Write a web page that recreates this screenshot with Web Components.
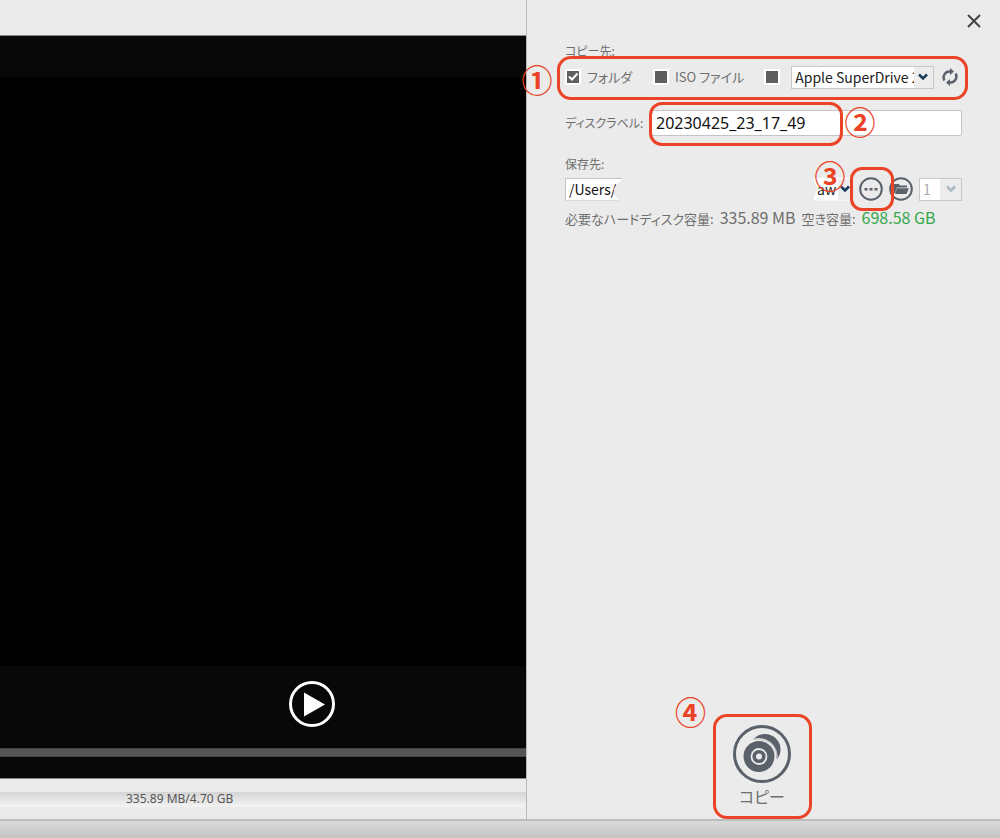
<!DOCTYPE html>
<html lang="ja">
<head>
<meta charset="utf-8">
<title>ディスクコピー</title>
<style>
html,body{margin:0;height:100%}
body{font-family:"Noto Sans CJK JP",sans-serif;font-size:13px;line-height:20px;color:#6e6e6e;background:#ebebeb;overflow:hidden}
</style>
</head>
<body>
<copy-app></copy-app>
<script>
function define(name, html, setup) {
  const template = document.createElement('template');
  template.innerHTML = '<style>*{box-sizing:border-box}</style>' + html;
  customElements.define(name, class extends HTMLElement {
    constructor() {
      super();
      this.attachShadow({mode: 'open'}).append(template.content.cloneNode(true));
    }
    connectedCallback() { if (setup) setup(this, this.shadowRoot); }
  });
}

// Red numbered outline laid over the controls of one step
define('step-mark', `
<style>
:host{position:absolute;box-sizing:border-box;border:3px solid #ea4326;border-radius:14px;pointer-events:none;z-index:2}
</style>`);

define('step-number', `
<style>
:host{position:absolute;z-index:3;font-size:31px;line-height:32px;width:32px;text-align:center;font-weight:700;color:#ea4326;pointer-events:none}
</style><slot></slot>`);

define('check-option', `
<style>
:host{display:block}
label{display:flex;align-items:center;gap:6px;white-space:nowrap;font-feature-settings:"palt"}
input{appearance:none;margin:0;width:16px;height:16px;border:2px solid #fff;background:#5f5f5f;flex:none}
input:checked{background:#5f5f5f url('data:image/svg+xml,<svg xmlns="http://www.w3.org/2000/svg" viewBox="0 0 12 12"><path d="M2 5.5 5 8.5 10.500 2.500" fill="none" stroke="white" stroke-width="2"/></svg>')}
</style>
<label><input type="checkbox"><span><slot></slot></span></label>`,
(host, root) => {
  const input = root.querySelector('input');
  input.checked = host.hasAttribute('checked');
  if (host.hasAttribute('label')) input.setAttribute('aria-label', host.getAttribute('label'));
});

define('drop-down', `
<style>
:host{display:grid;height:23px}
select,svg{grid-area:1/1}
select{appearance:none;width:100%;height:100%;min-width:0;margin:0;border:1px solid #c8c8c8;border-radius:0;padding:0 19px 0 3px;color:#222;font:inherit;font-size:14px;line-height:20px;background:linear-gradient(#ececec,#ececec) right/19px 100% no-repeat #fff}
svg{width:10px;height:8px;justify-self:end;align-self:center;margin-right:6px;color:#173a58;pointer-events:none}
:host([disabled]) select{color:#aaa;opacity:1}
:host([disabled]) svg{color:#a9b8c2}
:host([disabled]) select{background-size:21px 100%}
:host([tail]) select{border-color:transparent;padding-right:12px;background-size:14px 100%}
:host([tail]) svg{margin-right:3px}
</style>
<select><option></option></select>
<svg viewBox="0 0 10 8"><path d="m1 1.500 4 4 4-4" fill="none" stroke="currentColor" stroke-width="2.500"/></svg>`,
(host, root) => {
  const select = root.querySelector('select');
  select.setAttribute('aria-label', host.getAttribute('label'));
  select.options[0].textContent = host.getAttribute('value');
  select.disabled = host.hasAttribute('disabled');
});

define('icon-button', `
<style>
:host{display:block;flex:none}
button{display:block;margin:0;padding:0;border:0;background:none;color:#5b616b}
::slotted(svg){display:block}
</style><button type="button"><slot></slot></button>`,
(host, root) => root.querySelector('button').setAttribute('aria-label', host.getAttribute('label')));

define('video-player', `
<style>
:host{display:grid;grid-template-rows:41px 1fr 112px;background:#000;border-top:1px solid #888;border-bottom:1px solid #888;min-height:0}
.band{background:#080808}
.controls{display:grid;grid-template-rows:82px 9px 1fr}
.play{padding:15px 0 0 289px}
.track{background:#555;border:solid #444;border-width:1px 0}
</style>
<div class="band"></div><div></div>
<div class="band controls">
<div class="play"><icon-button label="再生"><svg width="46" height="46" viewBox="0 0 46 46"><circle cx="23" cy="23" r="21.500" fill="none" stroke="#fff" stroke-width="3"/><path d="M15 11.500v24L36 23.500z" fill="#fff"/></svg></icon-button></div>
<div class="track"></div></div>`);

define('disc-capacity', `
<style>
:host{display:block;padding-top:13px;color:#555}
div{height:15px;padding-left:126px;background:linear-gradient(#d5d5d5,#f3f3f3);font:12px/14px "Noto Sans",sans-serif}
</style><div>335.89 MB/4.70 GB</div>`);

define('copy-panel', `
<style>
:host{display:flex;flex-direction:column;position:relative;padding:41px 38px 0;min-width:0}
.close{position:absolute;top:14px;right:19px}
.row{display:flex;align-items:center;position:relative}
.title{font-size:12px;line-height:20px;font-feature-settings:"palt"}
.targets{height:32px}
.targets check-option:nth-of-type(2){margin-left:21px}
.targets check-option:nth-of-type(3){margin-left:20px}
.targets drop-down{flex:1;min-width:0;margin:0 8px 0 5px}
.targets icon-button{margin-right:4px}
.disc{height:26px;margin-top:17px}
.disc label{width:86px;font-size:12px;font-feature-settings:"palt"}
input{font:inherit;color:#111;margin:0;border:1px solid #c4c4c4;background:#fff;border-radius:0;min-width:0}
.disc input{flex:1;height:26px;font-family:"Noto Sans",sans-serif;font-size:16px;border-radius:2px;padding:0 4px}
.save{margin-top:18px}
.path{height:24px;margin-top:3px}
.path input{width:58px;height:23px;border-right:0;padding:0 3px;font-size:14px;clip-path:polygon(0 0,100% 0,52px 30%,49px 50%,49px 75%,54px 100%,0 100%)}
.hidden{flex:1}
.tail{width:40px;clip-path:polygon(0 0,100% 0,100% 100%,0 100%,4px 50%)}
.path icon-button{margin-left:6px}
.count{width:43px;margin-left:6px}
.size{display:flex;gap:6px;align-items:baseline;margin-top:5px;font-size:13px;line-height:22px;white-space:nowrap;font-feature-settings:"palt"}
.size b{font-weight:400;font-size:16px;font-feature-settings:normal}
.size .free{color:#35a84b}
.copy{position:relative;align-self:center;margin:auto 3px 0 0;width:99px;height:105px;display:flex;justify-content:center}
.copy button{border:0;background:none;padding:11px 0 0;margin:0;font:inherit;font-size:16px;line-height:26px;color:#6e6e6e;font-feature-settings:"palt";display:flex;flex-direction:column;align-items:center}
.copy svg{display:block}
.one{inset:-5px -6px -7px -8px}
.two{inset:-8px 119px -10px 84px;border-radius:13px}
.three{inset:-10px 68px -10px auto;width:44px;border-radius:12px}
.four{inset:0}
.n1{left:-44px;top:2px}.n2{right:86px;top:-5px}.n3{right:116px;top:-18px}.n4{left:-38px;top:-19px}
</style>
<icon-button class="close" label="閉じる"><svg width="14" height="14" viewBox="0 0 14 14"><path d="m1 1 12 12M13 1 1 13" fill="none" stroke="#444" stroke-width="2"/></svg></icon-button>
<div class="title">コピー先:</div>
<div class="row targets">
<check-option checked>フォルダ</check-option>
<check-option>ISO ファイル</check-option>
<check-option label="ドライブ"></check-option>
<drop-down label="ドライブ" value="Apple SuperDrive 2"></drop-down>
<icon-button label="更新"><svg width="16" height="18" viewBox="0 0 16 18" fill="none" stroke="#5b616b" stroke-width="2.500"><path d="M2.500 12.500A6 6 0 0 1 8.500 3.500M13.500 5.500a6 6 0 0 1-6 9"/><path d="M8 0v7l4-3.500zM8 11v7l-4-3.500z" fill="#5b616b" stroke="none"/></svg></icon-button>
<step-mark class="one"></step-mark><step-number class="n1">①</step-number>
</div>
<div class="row disc"><label for="disc">ディスクラベル:</label><input id="disc" value="20230425_23_17_49"><step-mark class="two"></step-mark><step-number class="n2">②</step-number></div>
<label class="title save" for="path">保存先:</label>
<div class="row path">
<input id="path" value="/Users/"><span class="hidden"></span><drop-down class="tail" tail label="保存先の履歴" value="aw"></drop-down>
<icon-button label="参照"><svg width="24" height="24" viewBox="0 0 24 24"><circle cx="12" cy="12" r="10.800" fill="none" stroke="#5b616b" stroke-width="2"/><path d="M5.500 11h3v2.500h-3zM10.500 11h3v2.500h-3zM15.500 11h3v2.500h-3z" fill="#5b616b"/></svg></icon-button>
<icon-button label="フォルダを開く"><svg width="24" height="24" viewBox="0 0 24 24"><circle cx="12" cy="12" r="10.800" fill="none" stroke="#5b616b" stroke-width="2"/><path d="M5 16V7h5l1 1.500h7v2H8L6 16zM8 11.200H20L17.500 17H6z" fill="#5b616b"/></svg></icon-button>
<drop-down class="count" disabled label="部数" value="1"></drop-down>
<step-mark class="three"></step-mark><step-number class="n3">③</step-number>
</div>
<div class="size"><span>必要なハードディスク容量:</span><b>335.89 MB</b><span>空き容量:</span><b class="free">698.58 GB</b></div>
<div class="copy"><button type="button"><svg width="58" height="58" viewBox="0 0 58 58"><circle cx="29" cy="29" r="27.500" fill="none" stroke="#5b616b" stroke-width="3"/><circle cx="32" cy="24.500" r="15.500" fill="#5b616b"/><circle cx="26" cy="31.500" r="18.500" fill="#ebebeb"/><path d="M21 14.500A17.500 17.500 0 0 1 43.500 34" fill="none" stroke="#5b616b" stroke-width="1" opacity=".35"/><circle cx="26" cy="31.500" r="15.500" fill="#5b616b"/><circle cx="26" cy="31.500" r="7.500" fill="none" stroke="#ebebeb" stroke-width="1.800"/><circle cx="26" cy="31.500" r="3" fill="#ebebeb"/></svg>コピー</button>
<step-mark class="four"></step-mark><step-number class="n4">④</step-number></div>`);

define('copy-app', `
<style>
:host{display:grid;grid-template:minmax(0,1fr) 19px/minmax(0,527fr) minmax(0,473fr);height:100vh}
.left{display:grid;grid-template-rows:35px minmax(0,1fr) 40px;border-right:1px solid #b8b8b8}
footer{grid-column:1/-1;border-top:2px solid #bdbdbd;background:linear-gradient(#dadada,#c4c4c4)}
</style>
<div class="left"><div></div><video-player></video-player><disc-capacity></disc-capacity></div>
<copy-panel></copy-panel>
<footer></footer>`);
</script>
</body>
</html>
